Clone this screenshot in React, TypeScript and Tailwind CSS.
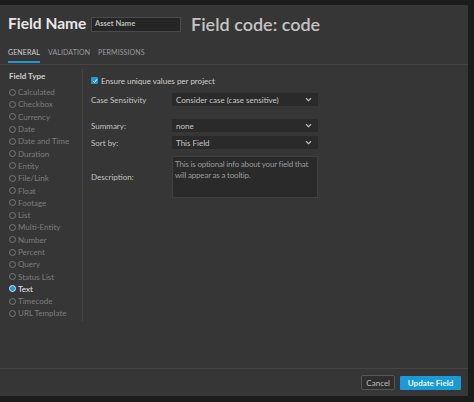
import React from "react";

const types = [
  "Calculated","Checkbox","Currency","Date","Date and Time","Duration","Entity","File/Link","Float","Footage","List","Multi-Entity","Number","Percent","Query","Status List","Text","Timecode","URL Template",
];

function Chevron() {
  return (
    <svg width="7" height="5" viewBox="0 0 7 5" className="shrink-0">
      <path d="M1 1.2 L3.5 3.6 L6 1.2" fill="none" stroke="#bfbfbf" strokeWidth="1.2" />
    </svg>
  );
}

function Select({ value }: { value: string }) {
  return (
    <div className="w-[146px] h-[13px] bg-[#2a2a2a] flex items-center justify-between pl-[4px] pr-[6px] text-[8px] text-[#c8c8c8]">
      <span>{value}</span>
      <Chevron />
    </div>
  );
}

export default function App() {
  return (
    <div className="w-[474px] h-[402px] bg-[#1c1c1c] pt-[5px] pr-[6px] pb-[6px]" style={{ fontFamily: 'Lato, "Noto Sans", sans-serif' }}>
      <div className="w-full h-full bg-[#363636] flex flex-col">
        {/* header */}
        <div className="flex items-center h-[37px] pl-[8px] pt-[1px] shrink-0">
          <div className="w-[83px] text-[15.5px] font-bold text-[#e8e8e8] leading-none">Field Name</div>
          <div className="w-[90px] h-[15px] bg-[#262626] border border-[#4a4a4a] flex items-center px-[3px] text-[7.5px] text-[#bdbdbd] font-bold">Asset Name</div>
          <div className="ml-[10px] text-[18px] font-semibold text-[#c4c4c4] leading-none">Field code: code</div>
        </div>
        {/* tabs */}
        <div className="flex items-end h-[23px] shrink-0 border-b border-[#444] pl-[8px] gap-[8px] text-[7px] text-[#9a9a9a] tracking-[0.1px]">
          <div className="flex flex-col text-[#cfcfcf]">
            <span className="pb-[4px]">GENERAL</span>
            <div className="h-[2px] bg-[#1a9ad6] w-full mb-[1px]" />
          </div>
          <span className="pb-[7px]">VALIDATION</span>
          <span className="pb-[7px]">PERMISSIONS</span>
        </div>
        {/* body */}
        <div className="flex flex-1 min-h-0">
          <div className="w-[83px] border-r border-[#474747] mt-[4px] mb-[47px] pl-[9px] pt-[1px]">
            <div className="text-[8px] font-bold text-[#cfcfcf] h-[16px]">Field Type</div>
            <div className="flex flex-col">
              {types.map((t) => {
                const sel = t === "Text";
                return (
                  <div key={t} className="flex items-center h-[12.3px] gap-[2px] text-[8px]">
                    {sel ? (
                      <div className="w-[7px] h-[7px] rounded-full bg-[#1a9ad6] border border-[#bfe6fb] shrink-0" />
                    ) : (
                      <div className="w-[7px] h-[7px] rounded-full border border-[#777] shrink-0" />
                    )}
                    <span className={sel ? "text-[#e6e6e6]" : "text-[#7d7d7d]"}>{t}</span>
                  </div>
                );
              })}
            </div>
          </div>
          <div className="flex-1 pl-[8px] pt-[10px] text-[8px] text-[#c2c2c2]">
            <div className="flex items-center gap-[3px] h-[11px]">
              <div className="w-[7px] h-[7px] bg-[#1a9ad6] rounded-[1px] flex items-center justify-center">
                <svg width="6" height="6" viewBox="0 0 6 6"><path d="M1 3 L2.5 4.5 L5 1.3" fill="none" stroke="#fff" strokeWidth="1" /></svg>
              </div>
              <span className="text-[#cfcfcf]">Ensure unique values per project</span>
            </div>
            <div className="flex items-center justify-between w-[227px] mt-[7px]">
              <span>Case Sensitivity</span>
              <Select value="Consider case (case sensitive)" />
            </div>
            <div className="flex items-center justify-between w-[227px] mt-[13px]">
              <span>Summary:</span>
              <Select value="none" />
            </div>
            <div className="flex items-center justify-between w-[227px] mt-[4px]">
              <span>Sort by:</span>
              <Select value="This Field" />
            </div>
            <div className="flex items-center justify-between w-[227px] mt-[7px]">
              <span>Description:</span>
              <div className="w-[146px] h-[42px] bg-[#2a2a2a] border border-[#3f3f3f] px-[2px] py-[2px] text-[8px] leading-[11px] tracking-[-0.2px] text-[#9a9a9a]">
                This is optional info about your field that will appear as a tooltip.
              </div>
            </div>
          </div>
        </div>
        {/* footer */}
        <div className="h-[28px] shrink-0 border-t border-[#444] flex items-center justify-end pr-[7px] gap-[5px]">
          <div className="h-[15px] px-[4px] border border-[#555] rounded-[2px] bg-[#2e2e2e] flex items-center text-[8px] text-[#bdbdbd]">Cancel</div>
          <div className="h-[14px] w-[61px] bg-[#1a9ad6] rounded-[1px] flex items-center justify-center text-[8px] font-bold text-[#eaf6fd]">Update Field</div>
        </div>
      </div>
    </div>
  );
}
